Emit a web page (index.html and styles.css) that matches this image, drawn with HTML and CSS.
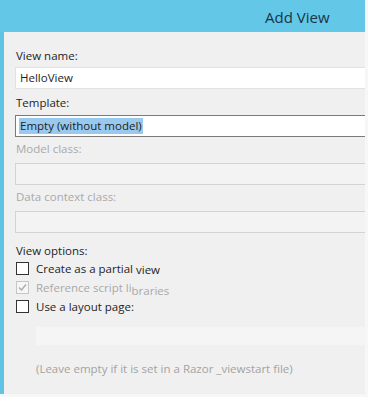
FILE: index.html
```html
<!DOCTYPE html>
<html>
<head>
<meta charset="utf-8">
<link rel="stylesheet" href="styles.css">
</head>
<body>
<div class="dialog">
  <div class="titlebar"><span class="title">Add View</span></div>
  <div class="content">
    <div class="label l-name">View name:</div>
    <div class="input i-name"><span class="val">HelloView</span></div>
    <div class="label l-tpl">Template:</div>
    <div class="input select"><span class="sel">Empty (without model)</span></div>
    <div class="label disabled l-model">Model class:</div>
    <div class="input off"></div>
    <div class="label disabled l-data">Data context class:</div>
    <div class="input off"></div>
    <div class="label l-opts">View options:</div>
    <div class="check"><span class="box"></span><span>Create as a partial <span class="drop1">view</span></span></div>
    <div class="check disabled"><span class="box dis"><svg width="11" height="11" viewBox="0 0 11 11"><path d="M2 5.5 L4.5 8 L9 2.5" fill="none" stroke="#a9a9a9" stroke-width="1.4"/></svg></span><span>Reference script li<span class="drop3">braries</span></span></div>
    <div class="check"><span class="box"></span><span>Use a layout page:</span></div>
    <div class="layout-input"></div>
    <div class="hint">(Leave empty if it is set in a Razor _viewstart file)</div>
  </div>
</div>
</body>
</html>
```
FILE: styles.css
```css
html, body {
  margin: 0;
  padding: 0;
  background: #f7f7f7;
}
body {
  font-family: "Open Sans", "Noto Sans", sans-serif;
  font-size: 11.5px;
  color: #1e1e1e;
}
.dialog {
  width: 365px;
  height: 394px;
  background: #f0f0f0;
  overflow: hidden;
  display: flex;
  flex-direction: column;
}
.titlebar {
  height: 32px;
  background: #63c7e8;
  display: flex;
  align-items: center;
  padding-left: 265px;
  flex-shrink: 0;
}
.title {
  font-size: 15px;
  color: #1b3546;
  margin-top: 2px;
}
.content {
  flex: 1;
  border-left: 4px solid #5fc4e4;
  padding-left: 11px;
  display: flex;
  flex-direction: column;
}
.label {
  line-height: 16px;
  height: 16px;
  padding-left: 1px;
}
.l-name { margin-top: 16px; }
.l-tpl { margin-top: 6px; }
.l-model { margin-top: 4px; }
.l-data { margin-top: 4px; }
.l-opts { margin-top: 10px; }
.label.disabled { color: #a9a9a9; }
.input {
  margin-top: 3px;
  height: 20px;
  margin-right: -10px;
  background: #ffffff;
  border: 1px solid #e2e2e2;
  border-right: none;
  display: flex;
  align-items: center;
  padding-left: 4px;
}
.input.select {
  margin-top: 4px;
  border-color: #7a7a7a;
}
.input.off {
  margin-top: 6px;
  background: #f3f3f3;
  border-color: #d3d3d3;
}
.val { line-height: 16px; }
.sel {
  background: #99c9ef;
  line-height: 16px;
  padding: 0 1px;
  margin-left: -1px;
}
.check {
  display: flex;
  align-items: center;
  height: 19px;
  gap: 7px;
  padding-left: 1px;
}
.check.disabled { color: #a9a9a9; }
.box {
  width: 11px;
  height: 11px;
  border: 1px solid #333333;
  background: #ffffff;
  display: flex;
  align-items: center;
  justify-content: center;
}
.box.dis {
  border-color: #c6c6c6;
  background: #f6f6f6;
}
.drop1 { position: relative; top: 1px; }
.drop3 { position: relative; top: 3px; }
.layout-input {
  margin-top: 11px;
  margin-left: 21px;
  margin-right: -10px;
  height: 18px;
  background: #f5f5f5;
}
.hint {
  margin-top: 16px;
  margin-left: 21px;
  line-height: 16px;
  color: #a3a3a3;
}
```
